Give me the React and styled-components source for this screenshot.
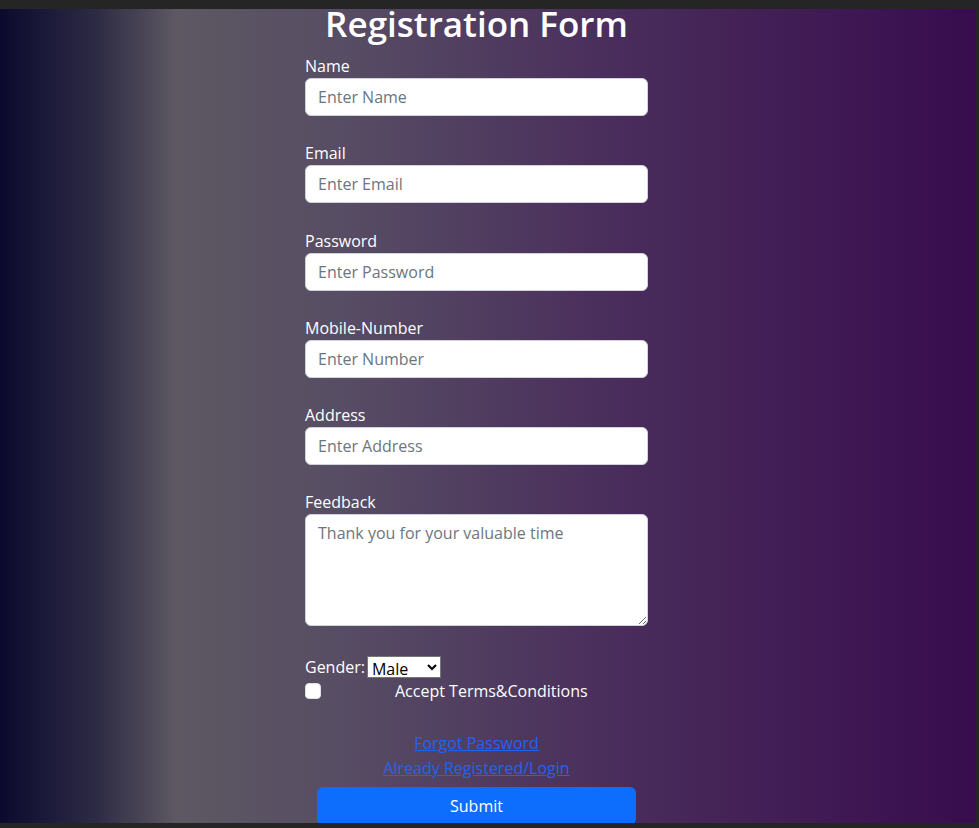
import React from "react";
import styled, { createGlobalStyle } from "styled-components";

const GlobalStyle = createGlobalStyle`
  * {
    box-sizing: border-box;
  }
  body {
    margin: 0;
    background: #252526;
    font-family: "Open Sans", "Noto Sans", sans-serif;
  }
`;

const Screen = styled.div`
  margin-top: 9px;
  width: 976px;
  height: 814px;
  overflow: hidden;
  background: linear-gradient(
    to right,
    #0b0a2e 0%,
    #2e2b45 10%,
    #5d5862 18%,
    #574d64 35%,
    #4a2e5c 62%,
    #380c4e 100%
  );
`;

const Form = styled.form`
  width: 343px;
  margin-left: 305px;
  color: #ffffff;
  font-size: 16px;
`;

const Title = styled.h1`
  margin: 0 0 15px;
  font-size: 35px;
  font-weight: 600;
  line-height: 30px;
  text-align: center;
`;

const Group = styled.div`
  margin-bottom: ${({ last }) => (last ? "29px" : "25.25px")};
`;

const Label = styled.label`
  display: block;
  line-height: 24px;
`;

const Input = styled.input`
  display: block;
  width: 100%;
  height: 38px;
  padding: 6px 12px;
  font: inherit;
  color: #212529;
  background: #ffffff;
  border: 1px solid #ced4da;
  border-radius: 6px;
  outline: none;

  &::placeholder {
    color: #6c757d;
  }
`;

const TextArea = styled.textarea`
  display: block;
  width: 100%;
  height: 112px;
  padding: 6px 12px;
  font: inherit;
  line-height: 24px;
  color: #212529;
  background: #ffffff;
  border: 1px solid #ced4da;
  border-radius: 6px;
  outline: none;
  resize: vertical;

  &::placeholder {
    color: #6c757d;
  }
`;

const Row = styled.div`
  display: flex;
  align-items: center;
  height: 24px;
`;

const Select = styled.select`
  margin-left: 2px;
  width: 74px;
  height: 22px;
  font: inherit;
  font-size: 16px;
  color: #000000;
  background: #ffffff;
  border: 1px solid #767676;
  border-radius: 0;
`;

const Check = styled.input`
  appearance: none;
  margin: 0;
  width: 16px;
  height: 16px;
  background: #ffffff;
  border: 1px solid #dee2e6;
  border-radius: 4px;
`;

const CheckText = styled.span`
  margin-left: 74px;
`;

const Links = styled.div`
  margin-top: 28px;
  text-align: center;
  line-height: 25px;
`;

const Link = styled.a`
  display: block;
  color: #1f63f2;
  text-decoration: underline;
`;

const Submit = styled.button`
  display: block;
  width: calc(100% - 24px);
  height: 38px;
  margin: 6px 12px 0;
  font: inherit;
  color: #ffffff;
  background: #0d6efd;
  border: none;
  border-radius: 6px;
`;

export default function App() {
  return (
    <>
      <GlobalStyle />
      <Screen>
        <Form onSubmit={(e) => e.preventDefault()}>
          <Title>Registration Form</Title>
          <Group>
            <Label>Name</Label>
            <Input type="text" placeholder="Enter Name" />
          </Group>
          <Group>
            <Label>Email</Label>
            <Input type="email" placeholder="Enter Email" />
          </Group>
          <Group>
            <Label>Password</Label>
            <Input type="password" placeholder="Enter Password" />
          </Group>
          <Group>
            <Label>Mobile-Number</Label>
            <Input type="text" placeholder="Enter Number" />
          </Group>
          <Group>
            <Label>Address</Label>
            <Input type="text" placeholder="Enter Address" />
          </Group>
          <Group last>
            <Label>Feedback</Label>
            <TextArea placeholder="Thank you for your valuable time" />
          </Group>
          <Row>
            Gender:
            <Select defaultValue="Male">
              <option>Male</option>
              <option>Female</option>
            </Select>
          </Row>
          <Row>
            <Check type="checkbox" />
            <CheckText>Accept Terms&amp;Conditions</CheckText>
          </Row>
          <Links>
            <Link href="#">Forgot Password</Link>
            <Link href="#">Already Registered/Login</Link>
          </Links>
          <Submit type="submit">Submit</Submit>
        </Form>
      </Screen>
    </>
  );
}
